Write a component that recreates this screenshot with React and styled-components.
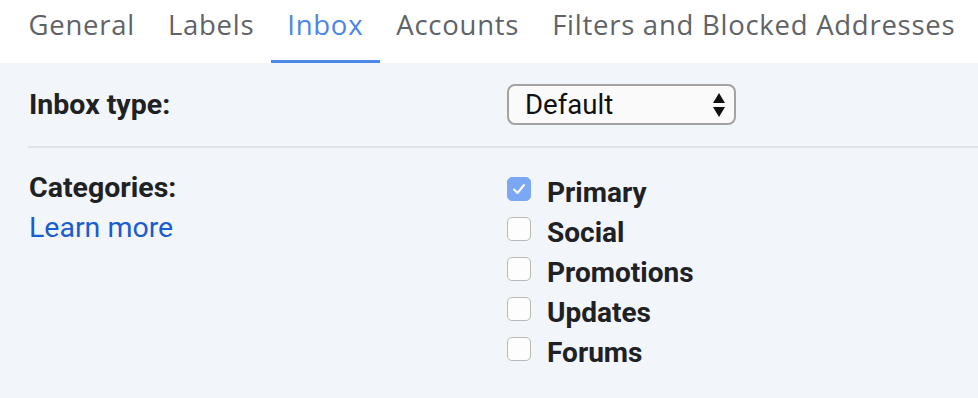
import React from "react";
import styled, { createGlobalStyle } from "styled-components";

const Global = createGlobalStyle`
  html, body { margin: 0; padding: 0; }
  body { background: #f2f5f9; font-family: Roboto, "Liberation Sans", sans-serif; }
`;

const Page = styled.div`
  width: 978px;
  height: 398px;
  overflow: hidden;
  background: #f2f5f9;
`;

const TabBar = styled.nav`
  display: flex;
  height: 63px;
  background: #ffffff;
  padding-left: 12px;
  box-sizing: border-box;
`;

const Tab = styled.div`
  position: relative;
  padding: 7px 16.5px 0;
  font-family: "Open Sans", Roboto, sans-serif;
  font-size: 27.5px;
  letter-spacing: 0.74px;
  line-height: 36px;
  color: ${(p) => (p.$active ? "#4a86e8" : "#5f6368")};
  white-space: nowrap;
  &::after {
    content: "";
    display: ${(p) => (p.$active ? "block" : "none")};
    position: absolute;
    left: 0;
    right: 0;
    bottom: 0;
    height: 3px;
    background: #4d88ec;
  }
`;

const Section = styled.div`
  display: grid;
  grid-template-columns: 478px 1fr;
  margin-left: 28px;
  padding-left: 1px;
  border-bottom: ${(p) => (p.$divider ? "2px solid #e1e3e6" : "none")};
  padding-top: ${(p) => p.$pt}px;
  padding-bottom: ${(p) => p.$pb}px;
`;

const LabelCol = styled.div`
  display: flex;
  flex-direction: column;
  justify-content: ${(p) => (p.$center ? "center" : "flex-start")};
`;

const Label = styled.div`
  font-size: 28.5px;
  font-weight: 700;
  line-height: 40px;
  color: #202124;
`;

const Link = styled.a`
  font-size: 28.5px;
  line-height: 40px;
  color: #1a5dcf;
  text-decoration: none;
`;

const Select = styled.div`
  width: 229px;
  height: 41px;
  box-sizing: border-box;
  border: 2px solid #a3a3a3;
  border-radius: 8px;
  background: #fafafa;
  display: flex;
  align-items: center;
  justify-content: space-between;
  padding: 0 8px 0 16px;
  font-size: 27.6px;
  color: #111;
`;

const CheckList = styled.div`
  display: flex;
  flex-direction: column;
  padding-top: 4px;
`;

const CheckRow = styled.label`
  display: flex;
  align-items: center;
  height: 40px;
  gap: 16px;
  font-size: 28px;
  font-weight: 700;
  color: #202124;
`;

const Box = styled.span`
  width: 24px;
  height: 24px;
  margin-bottom: 6px;
  box-sizing: border-box;
  border-radius: 5px;
  border: 1px solid ${(p) => (p.$checked ? "#7ba7f5" : "#b9b9b9")};
  background: ${(p) => (p.$checked ? "#7ba7f5" : "#fdfdfd")};
  display: flex;
  align-items: center;
  justify-content: center;
  flex-shrink: 0;
`;

const tabs = ["General", "Labels", "Inbox", "Accounts", "Filters and Blocked Addresses"];
const cats = [
  ["Primary", true],
  ["Social", false],
  ["Promotions", false],
  ["Updates", false],
  ["Forums", false],
];

export default function App() {
  return (
    <Page>
      <Global />
      <TabBar>
        {tabs.map((t) => (
          <Tab key={t} $active={t === "Inbox"}>
            {t}
          </Tab>
        ))}
      </TabBar>
      <Section $divider $pt={21} $pb={21}>
        <LabelCol $center>
          <Label>Inbox type:</Label>
        </LabelCol>
        <div>
          <Select>
            <span>Default</span>
            <svg width="14" height="26" viewBox="0 0 14 26">
              <path d="M7 1 L13 11 H1 Z" fill="#111" />
              <path d="M1 15 H13 L7 25 Z" fill="#111" />
            </svg>
          </Select>
        </div>
      </Section>
      <Section $pt={20} $pb={10}>
        <LabelCol>
          <Label>Categories:</Label>
          <Link href="#">Learn more</Link>
        </LabelCol>
        <CheckList>
          {cats.map(([c, on]) => (
            <CheckRow key={c}>
              <Box $checked={on}>
                {on && (
                  <svg width="14" height="12" viewBox="0 0 14 12">
                    <path d="M2 6.5 L5.5 10 L12 2" stroke="#fff" strokeWidth="2" fill="none" strokeLinecap="round" strokeLinejoin="round" />
                  </svg>
                )}
              </Box>
              {c}
            </CheckRow>
          ))}
        </CheckList>
      </Section>
    </Page>
  );
}
